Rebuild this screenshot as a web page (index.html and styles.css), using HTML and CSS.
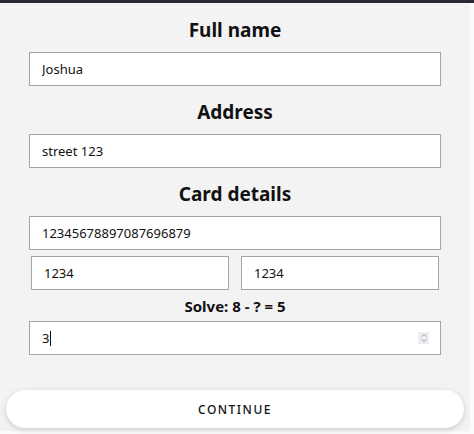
FILE: index.html
```html
<!DOCTYPE html>
<html lang="en">
<head>
<meta charset="utf-8">
<title>Checkout</title>
<link rel="stylesheet" href="styles.css">
</head>
<body>
<div class="topbar"></div>
<div class="frame">
  <form class="form">
    <h2 class="heading">Full name</h2>
    <input class="field" type="text" value="Joshua">
    <h2 class="heading heading-gap">Address</h2>
    <input class="field" type="text" value="street 123">
    <h2 class="heading heading-gap">Card details</h2>
    <input class="field" type="text" value="12345678897087696879">
    <div class="row">
      <input class="field small" type="text" value="1234">
      <input class="field small" type="text" value="1234">
    </div>
    <div class="solve">Solve: 8 - ? = 5</div>
    <div class="answer">
      <input class="field" type="number" value="3">
      <span class="caret"></span>
      <span class="spin">
        <svg width="8" height="10" viewBox="0 0 8 10"><path d="M1.5 3.5 4 1.5 6.5 3.5M1.5 6.5 4 8.5 6.5 6.5" fill="none" stroke="#9a9aa4" stroke-width="0.9"/></svg>
      </span>
    </div>
  </form>
  <button class="continue" type="button">CONTINUE</button>
</div>
</body>
</html>
```
FILE: styles.css
```css
* { box-sizing: border-box; }
html, body { margin: 0; padding: 0; }
body {
  width: 474px;
  height: 434px;
  background: #fbfbfb;
  font-family: "Noto Sans", "Open Sans", sans-serif;
  color: #111;
  overflow: hidden;
}
.topbar {
  height: 3px;
  background: #2b2a33;
}
.frame {
  width: 470px;
  height: 428px;
  background: #f3f3f3;
  padding-top: 14px;
}
.form {
  display: flex;
  flex-direction: column;
  align-items: center;
  padding: 0 29px;
}
.heading {
  margin: 0 0 9px;
  font-size: 19px;
  line-height: 26px;
  font-weight: 700;
  text-align: center;
}
.heading-gap { margin-top: 13px; }
.field {
  width: 412px;
  height: 34px;
  margin: 0;
  padding: 0 12px;
  border: 1px solid #a3a3a8;
  border-radius: 0;
  background: #fff;
  font-family: "Noto Sans", "Open Sans", sans-serif;
  font-size: 13px;
  color: #111;
  outline: none;
}
.field::-webkit-inner-spin-button,
.field::-webkit-outer-spin-button {
  -webkit-appearance: none;
  margin: 0;
}
.row {
  display: flex;
  gap: 12px;
  width: 408px;
  margin-top: 6px;
}
.field.small { width: 198px; }
.solve {
  margin-top: 6px;
  margin-bottom: 5px;
  font-size: 15px;
  line-height: 20px;
  font-weight: 700;
  text-align: center;
}
.answer {
  position: relative;
  width: 412px;
  height: 34px;
}
.caret {
  position: absolute;
  left: 20.5px;
  top: 10px;
  width: 1.5px;
  height: 15px;
  background: #111;
}
.spin {
  position: absolute;
  right: 12px;
  top: 11px;
  width: 11px;
  height: 12px;
  background: #ececf1;
  display: flex;
  align-items: center;
  justify-content: center;
}
.continue {
  display: block;
  width: 458px;
  height: 38px;
  margin: 35px 0 0 6px;
  border: none;
  border-radius: 19px;
  background: #fff;
  box-shadow: 0 2px 6px rgba(0,0,0,0.16);
  font-family: "Noto Sans", "Open Sans", sans-serif;
  font-size: 12px;
  font-weight: 500;
  letter-spacing: 1.5px;
  color: #111;
}
```
